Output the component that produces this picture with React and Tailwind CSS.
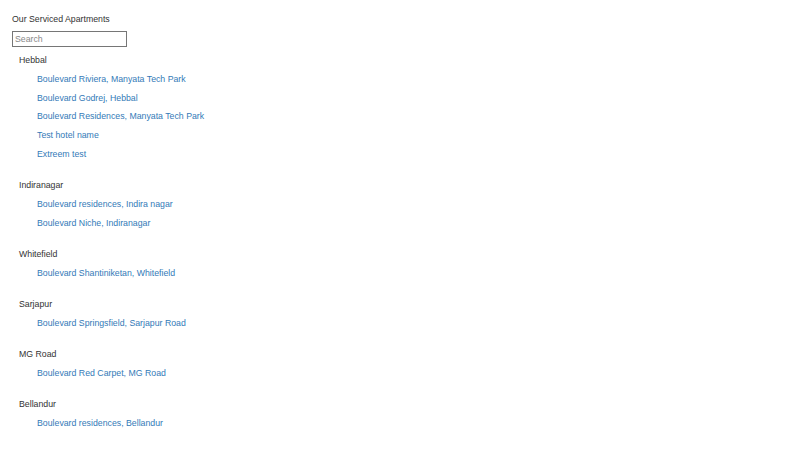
import React from "react";

const groups = [
  ["Hebbal", ["Boulevard Riviera, Manyata Tech Park", "Boulevard Godrej, Hebbal", "Boulevard Residences, Manyata Tech Park", "Test hotel name", "Extreem test"]],
  ["Indiranagar", ["Boulevard residences, Indira nagar", "Boulevard Niche, Indiranagar"]],
  ["Whitefield", ["Boulevard Shantiniketan, Whitefield"]],
  ["Sarjapur", ["Boulevard Springsfield, Sarjapur Road"]],
  ["MG Road", ["Boulevard Red Carpet, MG Road"]],
  ["Bellandur", ["Boulevard residences, Bellandur"]],
];

export default function App() {
  return (
    <div className="min-h-[450px] w-[800px] bg-white pl-3 pt-[10px] text-[8.75px] leading-[18.75px] text-[#333]" style={{ fontFamily: '"Liberation Sans", Arial, sans-serif' }}>
      <div>Our Serviced Apartments</div>
      <input
        type="text"
        placeholder="Search"
        className="mt-[2.25px] block h-4 w-[115px] border border-[#767676] px-[2px] text-[8.75px] leading-none text-[#333] placeholder:text-[#888] outline-none"
        style={{ fontFamily: '"Liberation Sans", Arial, sans-serif' }}
      />
      <div className="mt-[5px] pl-[7px]">
        {groups.map(([name, items]) => (
          <div key={name} className="mb-[13.5px]">
            <div className="leading-[17.75px]">{name}</div>
            <div className="flex flex-col items-start pl-[18px] leading-[18.75px]">
              {items.map((it) => (
                <a key={it} href="#" className="text-[#337ab7]">{it}</a>
              ))}
            </div>
          </div>
        ))}
      </div>
    </div>
  );
}
